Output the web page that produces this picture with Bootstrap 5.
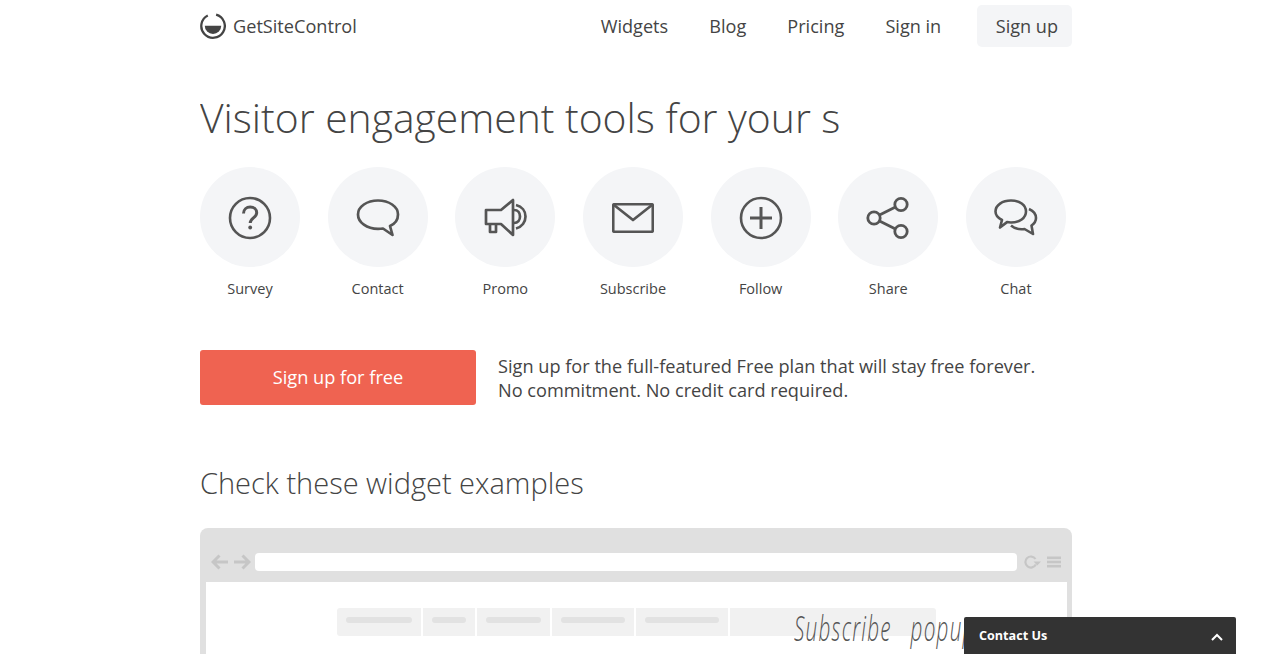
<!DOCTYPE html>
<html lang="en">
<head>
<meta charset="utf-8">
<title>GetSiteControl</title>
<link href="https://cdn.jsdelivr.net/npm/bootstrap@5.3.0/dist/css/bootstrap.min.css" rel="stylesheet">
<style>
html,body{height:100%;overflow:hidden}
body{font-family:"Open Sans",sans-serif;color:#444;background:#fff}
.shell{width:872px;margin-left:200px}
.topbar{height:53px}
.brand{font-size:18.15px;color:#444;text-decoration:none;gap:7px;line-height:26px;margin-top:-1px}
.toplinks{margin-top:-2px}
.toplink{font-size:18.1px;color:#444;text-decoration:none;padding:8px 18px;line-height:26px;border-radius:5px;margin-left:5.1px}
.toplink.boxed{background:#f4f5f7;height:42px;padding:8px 14px 8px 19px;margin-left:17.5px}
.headline{font-size:40.85px;font-weight:300;line-height:56px;margin:36px 0 22.3px;color:#444;white-space:nowrap;overflow:hidden}
.tool{width:100px;font-size:14.5px;line-height:20px;text-align:center}
.toolring{width:100px;height:100px;border-radius:50%;background:#f4f5f7;margin-bottom:11.7px;padding-top:1px}
.toolrow{justify-content:space-between;width:866px}
.cta{width:276px;height:55px;background:#ef6351;border:0;border-radius:3px;font-size:18.2px;color:#fff;padding:0}
.cta:hover{background:#ef6351;color:#fff}
.ctanote{font-size:18.17px;line-height:24px;color:#444;margin-top:2px}
.ctablock{margin-top:51px;gap:22px}
.subhead{font-size:29px;font-weight:300;line-height:40px;margin:58px 0 25px;color:#444}
.mock{background:#e0e0e0;border-radius:8px 8px 0 0;height:200px;padding:25px 5px 0 6px}
.mockbar{height:18px;margin-bottom:11px;padding:0 0 0 5px}
.addr{width:762px;height:18px;background:#fff;border-radius:4px;margin:0 7px 0 4px}
.burger{margin-left:6px}
.mockpage{background:#fff;height:120px;padding:26px 0 0 131px;position:relative}
.menustrip{width:599px;height:28px;gap:2px}
.menucell{background:#f1f1f1;height:28px;padding:9px;display:flex}
.menucell i{display:block;height:6px;width:100%;border-radius:3px;background:#e2e2e2}
.menucell:first-child{border-radius:3px 0 0 3px}
.menucell:last-child{border-radius:0 3px 3px 0}
.script{position:absolute;left:588px;top:26px;font-family:"Open Sans",sans-serif;font-style:italic;font-weight:300;font-size:34px;line-height:40px;color:#555;letter-spacing:2px;word-spacing:20px;white-space:nowrap;transform:scale(.61,1);transform-origin:left top}
.contactdock{position:fixed;left:964px;bottom:0;width:272px;height:37px;background:#333;color:#fff;border-radius:2px 2px 0 0;padding:2px 13px 0 15px;font-size:12.6px;font-weight:700}
</style>
</head>
<body>
<div class="shell">
  <nav class="topbar d-flex align-items-center justify-content-between">
    <a class="brand d-flex align-items-center" href="#">
      <svg width="26" height="26" viewBox="0 0 25 25" fill="none"><path d="M15.500 1.600A11.300 11.300 0 1 1 7.500 2.400" stroke="#444" stroke-width="2.200"/><path d="M4.600 12.300h15.800a7.900 7.900 0 0 1-15.800 0z" fill="#444"/></svg>
      <span>GetSiteControl</span>
    </a>
    <div class="toplinks d-flex align-items-center">
      <a class="toplink" href="#">Widgets</a>
      <a class="toplink" href="#">Blog</a>
      <a class="toplink" href="#">Pricing</a>
      <a class="toplink" href="#">Sign in</a>
      <a class="toplink boxed" href="#">Sign up</a>
    </div>
  </nav>

  <h1 class="headline">Visitor engagement tools for your s</h1>

  <div class="toolrow d-flex">
    <div class="tool"><div class="toolring d-flex align-items-center justify-content-center">
      <svg width="44" height="44" viewBox="0 0 44 44" fill="none" stroke="#555" stroke-width="2.600"><circle cx="22" cy="22" r="20"/><path d="M15.500 17.500c0-4 3-6.500 6.700-6.500 3.800 0 6.500 2.300 6.500 5.700 0 5-6.500 5.300-6.500 10.300" stroke-width="3"/><circle cx="22.200" cy="31.500" r="1.900" fill="#555" stroke="none"/></svg>
    </div>Survey</div>
    <div class="tool"><div class="toolring d-flex align-items-center justify-content-center">
      <svg width="44" height="40" viewBox="0 0 44 40" fill="none" stroke="#555" stroke-width="2.700" stroke-linejoin="round"><path d="M22 2.500c11 0 20 6 20 14 0 5.500-3.500 9.500-8 11.500l2.500 9-9.500-6.500c-1.500.3-3.200.4-5 .4-11 0-20-6.400-20-14.400s9-14 20-14z"/></svg>
    </div>Contact</div>
    <div class="tool"><div class="toolring d-flex align-items-center justify-content-center">
      <svg width="44" height="40" viewBox="0 0 44 40" fill="none" stroke="#555" stroke-width="2.700" stroke-linejoin="round"><path d="M3 12h15L30 2v35L18 26H3z"/><path d="M7 26v8h6v-8"/><path d="M31 12c4 0 6 3 6 6.500S35 25 31 25"/><path d="M33 7c6 1.500 9.500 6 9.500 11.500S39 29 33 30.500"/></svg>
    </div>Promo</div>
    <div class="tool"><div class="toolring d-flex align-items-center justify-content-center">
      <svg width="42" height="30" viewBox="0 0 42 30" fill="none" stroke="#555" stroke-width="2.700" stroke-linejoin="round"><rect x="1.200" y="1.200" width="39.600" height="27.600" rx="1.500"/><path d="M2 2l19 15L40 2"/></svg>
    </div>Subscribe</div>
    <div class="tool"><div class="toolring d-flex align-items-center justify-content-center">
      <svg width="44" height="44" viewBox="0 0 44 44" fill="none" stroke="#555" stroke-width="2.600"><circle cx="22" cy="22" r="20"/><path d="M11 22h22M22 11v22" stroke-width="3"/></svg>
    </div>Follow</div>
    <div class="tool"><div class="toolring d-flex align-items-center justify-content-center">
      <svg width="44" height="44" viewBox="0 0 44 44" fill="none" stroke="#555" stroke-width="2.800"><circle cx="35" cy="8.500" r="6.200"/><circle cx="35" cy="35.500" r="6.200"/><circle cx="8" cy="22" r="6.200"/><path d="M13.500 19l16-8M13.500 25l16 8"/></svg>
    </div>Share</div>
    <div class="tool"><div class="toolring d-flex align-items-center justify-content-center">
      <svg width="44" height="40" viewBox="0 0 44 40" fill="none" stroke="#555" stroke-width="2.600" stroke-linejoin="round"><path d="M17 2.500c8.500 0 15 4.500 15 11s-6.500 11-15 11c-1.500 0-2.500 0-4-.4L6 29.500l2-7.500C4 20 1.500 17 1.500 13.500c0-6.500 7-11 15.500-11z"/><path d="M35 11c4.500 2 7 5 7 9 0 3-1.500 5.500-4.500 7.500L39 36l-8.500-5c-5 .6-10-.5-13.500-3.500"/></svg>
    </div>Chat</div>
  </div>

  <div class="ctablock d-flex align-items-center">
    <a class="btn cta d-flex align-items-center justify-content-center" href="#">Sign up for free</a>
    <p class="ctanote mb-0">Sign up for the full-featured Free plan that will stay free forever.<br>No commitment. No credit card required.</p>
  </div>

  <h2 class="subhead">Check these widget examples</h2>

  <div class="mock">
    <div class="mockbar d-flex align-items-center">
      <svg width="40" height="16" viewBox="0 0 40 16" fill="none" stroke="#c6c6c6" stroke-width="3"><path d="M17 8H2M8.500 1.500L2 8l6.500 6.500M23 8h15M31.500 1.500L38 8l-6.500 6.500"/></svg>
      <div class="addr"></div>
      <svg width="17" height="14" viewBox="0 0 17 14" fill="none" stroke="#c6c6c6" stroke-width="2.200"><path d="M11.500 4A5.500 5.500 0 1 0 11.800 9.500"/><path d="M9.500 6.500h7.500l-3.700 4z" fill="#c6c6c6" stroke="none"/></svg>
      <svg class="burger" width="14" height="12" viewBox="0 0 14 12" fill="#c6c6c6"><rect width="14" height="2.600" y=".5"/><rect width="14" height="2.600" y="4.700"/><rect width="14" height="2.600" y="8.900"/></svg>
    </div>
    <div class="mockpage">
      <div class="menustrip d-flex">
        <div class="menucell" style="width:83.5px"><i></i></div>
        <div class="menucell" style="width:52.5px"><i></i></div>
        <div class="menucell" style="width:73px"><i></i></div>
        <div class="menucell" style="width:82px"><i></i></div>
        <div class="menucell" style="width:92px"><i></i></div>
        <div class="menucell" style="width:206px"></div>
      </div>
      <div class="script">Subscribe popup</div>
    </div>
  </div>
</div>

<div class="contactdock d-flex align-items-center justify-content-between">
  <span>Contact Us</span>
  <svg width="12" height="8" viewBox="0 0 12 8" fill="none" stroke="#fff" stroke-width="2"><path d="M1 7l5-5 5 5"/></svg>
</div>
<script src="https://cdn.jsdelivr.net/npm/bootstrap@5.3.0/dist/js/bootstrap.bundle.min.js"></script>
</body>
</html>
